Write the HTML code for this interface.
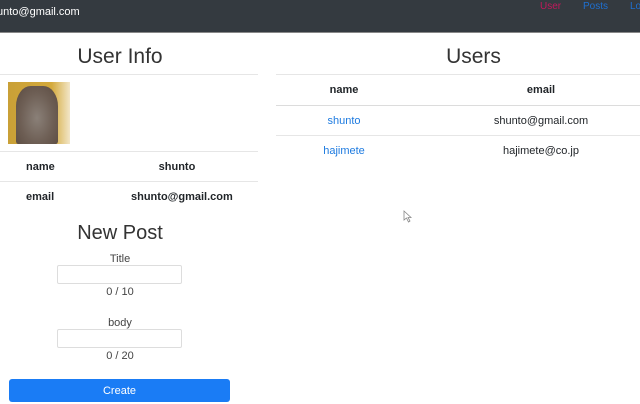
<!DOCTYPE html>
<html><head><style>
*{margin:0;padding:0;box-sizing:border-box}
body{width:640px;height:404px;overflow:hidden;background:#fff;font-family:"Liberation Sans",sans-serif;color:#212529;position:relative}
.a{position:absolute}
.nav{left:0;top:0;width:640px;height:33px;background:#343a40;border-bottom:1px solid #888}
.hr{height:1px;background:#e6e6e6}
.c{text-align:center}
.b{font-weight:bold;font-size:11px}
.t{font-size:11px}
</style></head><body>
<div class="a nav"></div>
<div class="a" style="left:-3px;top:6px;color:#fff;font-size:11px">unto@gmail.com</div>
<div class="a" style="left:540px;top:1px;color:#c2185b;font-size:10px">User</div>
<div class="a" style="left:583px;top:1px;color:#1e6fd0;font-size:10px">Posts</div>
<div class="a" style="left:630px;top:1px;color:#1e6fd0;font-size:10px">Lo</div>

<div class="a c" style="left:0;top:45px;width:240px;font-size:21px;color:#333;font-weight:300">User Info</div>
<div class="a hr" style="left:0;top:74px;width:258px"></div>
<div class="a" style="left:8px;top:82px;width:62px;height:62px;background:linear-gradient(90deg,#c9a037 0%,#d4a93a 70%,#f2e6c8 100%)">
  <div class="a" style="left:8px;top:4px;width:42px;height:58px;background:radial-gradient(ellipse at 50% 55%,#8a8078 0%,#6e5f55 55%,#5a4a40 100%);border-radius:35% 35% 5% 5%"></div>
</div>
<div class="a hr" style="left:0;top:151px;width:258px"></div>
<div class="a b" style="left:26px;top:161px">name</div>
<div class="a b c" style="left:120px;top:161px;width:114px">shunto</div>
<div class="a hr" style="left:0;top:181px;width:258px"></div>
<div class="a b" style="left:26px;top:191px">email</div>
<div class="a b" style="left:131px;top:191px">shunto@gmail.com</div>

<div class="a c" style="left:0;top:222px;width:240px;font-size:20px;color:#333">New Post</div>
<div class="a c t" style="left:0;top:253px;width:240px;color:#444">Title</div>
<div class="a" style="left:57px;top:265px;width:125px;height:19px;border:1px solid #ddd;border-radius:2px"></div>
<div class="a c t" style="left:0;top:286px;width:240px;color:#444">0 / 10</div>
<div class="a c t" style="left:0;top:317px;width:240px;color:#444">body</div>
<div class="a" style="left:57px;top:329px;width:125px;height:19px;border:1px solid #ddd;border-radius:2px"></div>
<div class="a c t" style="left:0;top:350px;width:240px;color:#444">0 / 20</div>
<div class="a c" style="left:9px;top:379px;width:221px;height:23px;background:#1a7cf5;border-radius:3px;color:#fff;font-size:11px;line-height:23px;padding-top:1px">Create</div>

<div class="a c" style="left:276px;top:45px;width:395px;font-size:21px;color:#333;font-weight:300">Users</div>
<div class="a hr" style="left:276px;top:74px;width:364px"></div>
<div class="a b c" style="left:284px;top:84px;width:120px">name</div>
<div class="a b c" style="left:481px;top:84px;width:120px">email</div>
<div class="a hr" style="left:276px;top:105px;width:364px;background:#dcdcdc"></div>
<div class="a t c" style="left:284px;top:115px;width:120px;color:#1e7be0">shunto</div>
<div class="a t c" style="left:481px;top:115px;width:120px">shunto@gmail.com</div>
<div class="a hr" style="left:276px;top:135px;width:364px"></div>
<div class="a t c" style="left:284px;top:145px;width:120px;color:#1e7be0">hajimete</div>
<div class="a t c" style="left:481px;top:145px;width:120px">hajimete@co.jp</div>
<svg class="a" style="left:403px;top:210px" width="10" height="13"><path d="M1 1 L1 10 L3.5 8 L5.5 12 L7 11 L5 7.5 L8 7.5 Z" fill="#fff" stroke="#888" stroke-width="0.8"/></svg>
</body></html>
